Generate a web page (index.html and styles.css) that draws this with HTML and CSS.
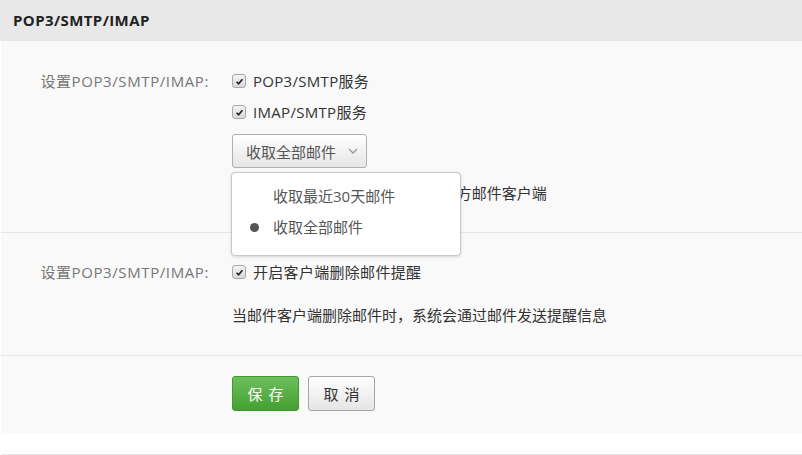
FILE: index.html
```html
<!DOCTYPE html>
<html lang="zh-CN">
<head>
    <meta charset="UTF-8">
    <meta name="viewport" content="width=device-width, initial-scale=1.0">
    <link rel="stylesheet" href="styles.css">
</head>
<body>
    <div class="panel">
        <div class="panelHead">POP3/SMTP/IMAP</div>

        <div class="section firstSection">
            <div class="formRow">
                <div class="formLabel">设置POP3/SMTP/IMAP:</div>
                <div class="formControls">
                    <label class="checkLine"><span class="checkBox"><svg viewBox="0 0 13 13" width="13" height="13"><path d="M3 6.8 L5.4 9.2 L10 3.8" fill="none" stroke="#222" stroke-width="2"/></svg></span>POP3/SMTP服务</label>
                    <label class="checkLine"><span class="checkBox"><svg viewBox="0 0 13 13" width="13" height="13"><path d="M3 6.8 L5.4 9.2 L10 3.8" fill="none" stroke="#222" stroke-width="2"/></svg></span>IMAP/SMTP服务</label>

                    <div class="selectWrap">
                        <button class="selectBtn">收取全部邮件<svg class="chevron" viewBox="0 0 10 6" width="10" height="6"><path d="M1 1 L5 5 L9 1" fill="none" stroke="#999" stroke-width="1.3"/></svg></button>
                        <div class="dropMenu">
                            <div class="dropItem">收取最近30天邮件</div>
                            <div class="dropItem selected">收取全部邮件</div>
                        </div>
                    </div>
                    <div class="noteLine">收取选项仅对使用POP协议的第三方邮件客户端</div>
                </div>
            </div>
        </div>

        <div class="section secondSection">
            <div class="formRow">
                <div class="formLabel">设置POP3/SMTP/IMAP:</div>
                <div class="formControls">
                    <label class="checkLine"><span class="checkBox"><svg viewBox="0 0 13 13" width="13" height="13"><path d="M3 6.8 L5.4 9.2 L10 3.8" fill="none" stroke="#222" stroke-width="2"/></svg></span>开启客户端删除邮件提醒</label>
                    <div class="descLine">当邮件客户端删除邮件时，系统会通过邮件发送提醒信息</div>
                </div>
            </div>
        </div>

        <div class="section btnSection">
            <button class="btn btnSave">保存</button>
            <button class="btn btnCancel">取消</button>
        </div>
    </div>
    <div class="bottomLine"></div>
</body>
</html>
```

FILE: styles.css
```css
body {
    margin: 0px;
    background-color: #ffffff;
    font-family: "Open Sans", "Noto Sans CJK SC", sans-serif;
    font-size: 15px;
    color: #333;
}
.panel{
    margin-left: 1px;
    background-color: #f9f9f9;
    border-bottom-left-radius: 3px;
}
.panelHead{
    height: 41px;
    line-height: 40px;
    padding-left: 13px;
    margin-left: -1px;
    background-color: #e8e8e8;
    font-weight: bold;
    font-size: 15px;
    letter-spacing: 0.4px;
    color: #222;
}
.section{
    border-bottom: 1px solid #e6e6e6;
}
.firstSection{
    padding-top: 30px;
    padding-bottom: 29px;
}
.secondSection{
    padding-top: 29px;
    padding-bottom: 30px;
}
.btnSection{
    border-bottom: none;
    padding: 20px 0 22px 231px;
    display: flex;
    gap: 9px;
}
.formRow{
    display: flex;
    gap: 23px;
}
.formLabel{
    width: 208px;
    text-align: right;
    line-height: 20px;
    letter-spacing: 0.6px;
    color: #777;
}
.formControls{
    display: flex;
    flex-direction: column;
    align-items: flex-start;
}
.checkLine{
    display: flex;
    align-items: center;
    gap: 7px;
    line-height: 20px;
    height: 20px;
    margin-bottom: 11px;
    letter-spacing: 0.3px;
    color: #333;
}
.checkLine:last-of-type{
    margin-bottom: 12px;
}
.checkBox{
    width: 12px;
    height: 12px;
    border: 1px solid #a8a8a8;
    border-radius: 3px;
    background: linear-gradient(#f4f4f4, #d9d9d9);
    display: flex;
    align-items: center;
    justify-content: center;
}
.checkBox svg{
    width: 11px;
    height: 11px;
}
.selectWrap{
    position: relative;
}
.selectBtn{
    height: 34px;
    width: 135px;
    padding: 0 0 0 13px;
    display: flex;
    align-items: center;
    gap: 12px;
    border: 1px solid #b0b0b0;
    border-radius: 3px;
    background: linear-gradient(#ffffff, #e6e6e6);
    font-family: "Open Sans", "Noto Sans CJK SC", sans-serif;
    font-size: 15px;
    color: #555;
}
.dropMenu{
    position: absolute;
    top: 38px;
    left: -1px;
    width: 228px;
    padding: 8px 0 12px 0;
    background-color: #fff;
    border: 1px solid #c8c8c8;
    border-radius: 4px;
    box-shadow: 0 1px 3px rgba(0, 0, 0, 0.15);
    z-index: 2;
}
.dropItem{
    position: relative;
    height: 31px;
    line-height: 31px;
    padding-left: 41px;
    color: #555;
}
.dropItem.selected::before{
    content: '';
    position: absolute;
    left: 18px;
    top: 11px;
    width: 9px;
    height: 9px;
    border-radius: 50%;
    background-color: #555;
}
.noteLine{
    margin-top: 15px;
    line-height: 20px;
    color: #333;
}
.descLine{
    margin-top: 11px;
    line-height: 20px;
    color: #333;
}
.btn{
    width: 67px;
    height: 35px;
    border-radius: 3px;
    font-family: "Open Sans", "Noto Sans CJK SC", sans-serif;
    font-size: 15px;
    letter-spacing: 6px;
    padding: 0 0 0 6px;
}
.btnSave{
    border: 1px solid #3f9a2e;
    background: linear-gradient(#6dbf5d, #43a02f);
    color: #fff;
}
.btnCancel{
    border: 1px solid #a5a5a5;
    background: linear-gradient(#ffffff, #e5e5e5);
    color: #333;
}
.bottomLine{
    margin: 21px 0 0 2px;
    border-top: 1px solid #e6e6e6;
}
```
